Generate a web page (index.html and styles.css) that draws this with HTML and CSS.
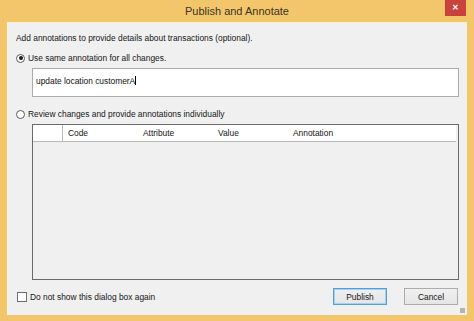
FILE: index.html
```html
<!DOCTYPE html>
<html lang="en">
<head>
    <meta charset="UTF-8">
    <title>Publish and Annotate</title>
    <link rel="stylesheet" href="styles.css">
</head>
<body>

    <div class="window">
        <!-- Title Bar -->
        <div class="title-bar">
            <span class="title">Publish and Annotate</span>
            <button class="close-btn">&#x2715;</button>
        </div>

        <!-- Dialog Content -->
        <div class="dialog">
            <p class="intro">Add annotations to provide details about transactions (optional).</p>

            <label class="option">
                <span class="radio checked"></span>
                Use same annotation for all changes.
            </label>
            <div class="textbox">update location customerA<span class="caret"></span></div>

            <label class="option option-review">
                <span class="radio"></span>
                Review changes and provide annotations individually
            </label>
            <div class="grid">
                <div class="grid-header">
                    <div class="col col-first"></div>
                    <div class="col">Code</div>
                    <div class="col">Attribute</div>
                    <div class="col">Value</div>
                    <div class="col">Annotation</div>
                </div>
            </div>

            <div class="footer">
                <label class="check-label">
                    <span class="checkbox"></span>
                    Do not show this dialog box again
                </label>
                <div class="buttons">
                    <button class="btn btn-default">Publish</button>
                    <button class="btn">Cancel</button>
                </div>
            </div>
            <div class="grip"></div>
        </div>
    </div>

</body>
</html>
```

FILE: styles.css
```css
/* Global */
body {
    margin: 0;
    padding: 0;
    font-family: 'Liberation Sans', Arial, sans-serif;
    background: #f3c66c;
}

.window {
    width: 474px;
    height: 321px;
    box-sizing: border-box;
    background: #f3c66c;
    padding: 0 7px 6px 7px;
    display: flex;
    flex-direction: column;
}

/* Title Bar */
.title-bar {
    height: 22px;
    display: flex;
    align-items: center;
    justify-content: center;
    position: relative;
}

.title {
    font-size: 11px;
    color: #3c3424;
}

.close-btn {
    position: absolute;
    top: 0;
    right: 1px;
    width: 21px;
    height: 16px;
    border: none;
    padding: 0;
    background: #c9433c;
    color: #fff;
    font-size: 8px;
    font-weight: bold;
    line-height: 16px;
}

/* Dialog */
.dialog {
    flex: 1;
    background: #f0f0f0;
    border-left: 1px solid #fbf6ea;
    border-top: 1px solid #f8eed8;
    padding: 0 8px 0 8px;
    position: relative;
    font-size: 8.4px;
    color: #161616;
}

.intro {
    margin: 10px 0 0 0;
    line-height: 10px;
}

.option {
    display: flex;
    align-items: center;
    gap: 3px;
    margin-top: 10px;
    line-height: 10px;
}

.option-review {
    margin-top: 12px;
}

.radio {
    width: 9px;
    height: 9px;
    border: 1px solid #5a5a5a;
    border-radius: 50%;
    background: #fff;
    box-sizing: border-box;
    position: relative;
}

.radio.checked::after {
    content: "";
    position: absolute;
    left: 1.5px;
    top: 1.5px;
    width: 4px;
    height: 4px;
    border-radius: 50%;
    background: #1a1a1a;
}

.textbox {
    margin: 5px 0 0 16px;
    height: 29px;
    box-sizing: border-box;
    border: 1px solid #acacac;
    background: #fff;
    padding: 7px 3px;
    line-height: 10px;
    color: #111;
}

.caret {
    display: inline-block;
    width: 1px;
    height: 9px;
    background: #000;
    vertical-align: -1px;
}

/* Grid */
.grid {
    margin: 5px 0 0 16px;
    height: 156px;
    box-sizing: border-box;
    border: 1px solid #6a6a6a;
    background: #f0f0f0;
    padding: 0 2px 0 0;
}

.grid-header {
    display: flex;
    height: 16px;
    background: #fff;
    border-bottom: 1px solid #b8b8b8;
    line-height: 16px;
}

.col {
    width: 75px;
    padding-left: 5px;
    box-sizing: border-box;
}

.col-first {
    width: 30px;
    border-right: 1px solid #b8b8b8;
}

/* Footer */
.footer {
    display: flex;
    justify-content: space-between;
    align-items: center;
    margin-top: 8px;
    padding-right: 1px;
}

.check-label {
    display: flex;
    align-items: center;
    gap: 3px;
    margin-left: 1px;
}

.checkbox {
    width: 10px;
    height: 10px;
    border: 1px solid #6e6e6e;
    background: #fff;
    box-sizing: border-box;
}

.buttons {
    display: flex;
    gap: 17px;
}

.btn {
    width: 54px;
    height: 17px;
    padding: 0;
    font-family: 'Liberation Sans', Arial, sans-serif;
    font-size: 8.4px;
    color: #161616;
    border: 1px solid #acacac;
    background: linear-gradient(#f0f0f0, #e5e5e5);
}

.btn-default {
    border-color: #4f9fe0;
    box-shadow: inset 0 0 0 1px #a6d0f2;
}

.grip {
    position: absolute;
    right: 2px;
    bottom: 2px;
    width: 5px;
    height: 5px;
    background:
        radial-gradient(circle, #b0b0b0 0.7px, transparent 0.8px) 0 0 / 2px 2px;
}
```
